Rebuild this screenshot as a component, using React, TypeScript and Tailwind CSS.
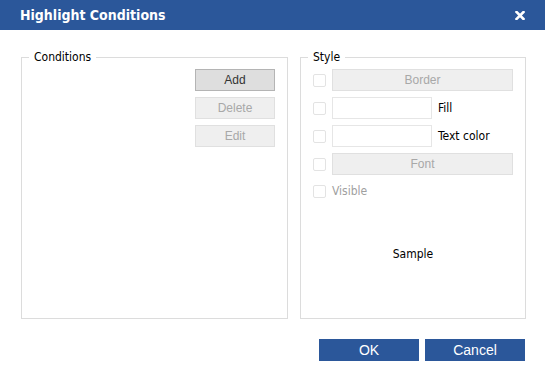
import React from "react";

const tahoma = "font-['Tahoma','DejaVu_Sans_Condensed',sans-serif]";
const arial = "font-['Liberation_Sans',Arial,sans-serif]";

function Check() {
  return (
    <span className="block w-[13px] h-[13px] shrink-0 rounded-[2px] border border-[#e3e3e3] bg-white" />
  );
}

function GreyButton({ label, disabled }: { label: string; disabled?: boolean }) {
  return (
    <button
      className={
        disabled
          ? `w-[80px] h-[22px] border border-[#e0e0e0] bg-[#efefef] text-[12px] text-[#a8a8a8] ${arial}`
          : `w-[80px] h-[22px] border border-[#b4b4b4] bg-[#dedede] text-[12px] text-[#333] ${arial}`
      }
    >
      {label}
    </button>
  );
}

export default function App() {
  return (
    <div className="w-[545px] h-[381px] bg-white overflow-hidden">
      {/* title bar */}
      <div className="h-[30px] bg-[#2b579a] flex items-center justify-between pl-[20px] pr-[20px]">
        <div className={`text-white font-bold text-[14px] ${tahoma}`}>Highlight Conditions</div>
        <svg width="10" height="9" viewBox="0 0 10 9" className="mt-[1px]">
          <path d="M1.5 1 L8.5 8 M8.5 1 L1.5 8" stroke="white" strokeWidth="2.6" strokeLinecap="square" />
        </svg>
      </div>

      <div className="flex pl-[21px] pt-[19px] gap-[12px]">
        {/* Conditions */}
        <fieldset className="w-[267px] h-[270px] border border-[#dcdcdc]">
          <legend className={`ml-[7px] px-[5px] text-[12px] leading-[16px] text-black ${tahoma}`}>Conditions</legend>
          <div className="flex flex-col items-end gap-[6px] pt-[4px] pr-[12px]">
            <GreyButton label="Add" />
            <GreyButton label="Delete" disabled />
            <GreyButton label="Edit" disabled />
          </div>
        </fieldset>

        {/* Style */}
        <fieldset className="w-[226px] h-[270px] border border-[#dcdcdc]">
          <legend className={`ml-[7px] px-[5px] text-[12px] leading-[16px] text-black ${tahoma}`}>Style</legend>
          <div className="flex flex-col gap-[6px] pt-[4px] pl-[12px] pr-[12px]">
            <div className="flex items-center gap-[6px]">
              <Check />
              <div className={`flex-1 h-[22px] border border-[#e0e0e0] bg-[#efefef] flex items-center justify-center text-[12px] text-[#a8a8a8] ${arial}`}>
                Border
              </div>
            </div>
            <div className="flex items-center gap-[6px]">
              <Check />
              <div className="w-[100px] h-[22px] border border-[#e6e6e6] bg-white" />
              <span className={`text-[12px] text-black ${tahoma}`}>Fill</span>
            </div>
            <div className="flex items-center gap-[6px]">
              <Check />
              <div className="w-[100px] h-[22px] border border-[#e6e6e6] bg-white" />
              <span className={`text-[12px] text-black ${tahoma}`}>Text color</span>
            </div>
            <div className="flex items-center gap-[6px]">
              <Check />
              <div className={`flex-1 h-[22px] border border-[#e0e0e0] bg-[#efefef] flex items-center justify-center text-[12px] text-[#a8a8a8] ${arial}`}>
                Font
              </div>
            </div>
            <div className="flex items-center gap-[6px] mt-[1px]">
              <Check />
              <span className={`text-[12px] text-[#a0a0a0] ${tahoma}`}>Visible</span>
            </div>
          </div>
          <div className={`mt-[45px] text-center text-[12px] text-black ${tahoma}`}>Sample</div>
        </fieldset>
      </div>

      {/* footer */}
      <div className="flex justify-end gap-[6px] pr-[20px] pt-[20px]">
        <button className={`w-[100px] h-[22px] bg-[#2b579a] text-white text-[14px] ${arial}`}>OK</button>
        <button className={`w-[100px] h-[22px] bg-[#2b579a] text-white text-[14px] ${arial}`}>Cancel</button>
      </div>
    </div>
  );
}
